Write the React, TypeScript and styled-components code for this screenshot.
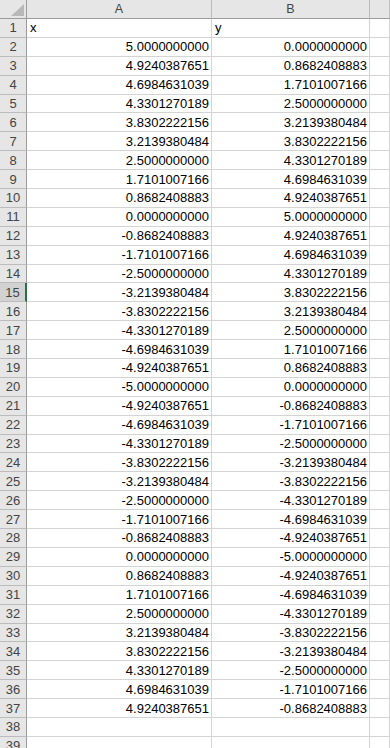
import styled, { createGlobalStyle } from "styled-components";

const GlobalStyle = createGlobalStyle`
  html, body {
    margin: 0;
    padding: 0;
    background: #ffffff;
    overflow: hidden;
  }
`;

const Sheet = styled.div`
  display: grid;
  grid-template-columns: 27px 185px 158px 1fr;
  grid-template-rows: 19px;
  grid-auto-rows: 18.9px;
  width: 390px;
  height: 748px;
  overflow: hidden;
  font-family: "Liberation Sans", Arial, sans-serif;
  font-size: 13px;
  color: #000;
`;

const Corner = styled.div`
  background: #e6e6e6;
  border-right: 1px solid #9b9b9b;
  border-bottom: 1px solid #9b9b9b;
  box-sizing: border-box;
  display: flex;
  align-items: flex-end;
  justify-content: flex-end;
  padding: 0 2px 2px 0;
`;

const ColHead = styled.div`
  background: #e6e6e6;
  border-right: 1px solid #bcbcbc;
  border-bottom: 1px solid #9b9b9b;
  box-sizing: border-box;
  display: flex;
  align-items: center;
  justify-content: center;
  color: #444;
  font-size: 12.5px;
`;

const RowHead = styled.div<{ $active?: boolean }>`
  background: ${(p) => (p.$active ? "#d2d2d2" : "#e6e6e6")};
  border-right: ${(p) => (p.$active ? "2px solid #217346" : "1px solid #9b9b9b")};
  border-bottom: 1px solid #bcbcbc;
  box-sizing: border-box;
  display: flex;
  align-items: center;
  justify-content: center;
  color: #444;
  font-size: 13px;
`;

const Cell = styled.div<{ $num?: boolean }>`
  border-right: 1px solid #d4d4d4;
  border-bottom: 1px solid #d4d4d4;
  box-sizing: border-box;
  display: flex;
  align-items: center;
  justify-content: ${(p) => (p.$num ? "flex-end" : "flex-start")};
  padding: 0 2px 0 3px;
  white-space: nowrap;
  overflow: hidden;
`;

const fmt = (v: number) => (Math.abs(v) < 1e-9 ? 0 : v).toFixed(10);

const points = Array.from({ length: 36 }, (_, i) => {
  const a = (i * 10 * Math.PI) / 180;
  return { x: fmt(5 * Math.cos(a)), y: fmt(5 * Math.sin(a)) };
});

const TOTAL_ROWS = 39;

export default function App() {
  const rows = [];
  for (let r = 1; r <= TOTAL_ROWS; r++) {
    let a = "";
    let b = "";
    let num = false;
    if (r === 1) {
      a = "x";
      b = "y";
    } else if (r - 2 < points.length) {
      a = points[r - 2].x;
      b = points[r - 2].y;
      num = true;
    }
    rows.push(
      <RowHead key={`h${r}`} $active={r === 15}>{r}</RowHead>,
      <Cell key={`a${r}`} $num={num}>{a}</Cell>,
      <Cell key={`b${r}`} $num={num}>{b}</Cell>,
      <Cell key={`c${r}`} />
    );
  }

  return (
    <>
      <GlobalStyle />
      <Sheet>
        <Corner>
          <svg width="13" height="12" viewBox="0 0 13 12">
            <polygon points="13,0 13,12 0,12" fill="#b8b8b8" />
          </svg>
        </Corner>
        <ColHead>A</ColHead>
        <ColHead>B</ColHead>
        <ColHead />
        {rows}
      </Sheet>
    </>
  );
}
